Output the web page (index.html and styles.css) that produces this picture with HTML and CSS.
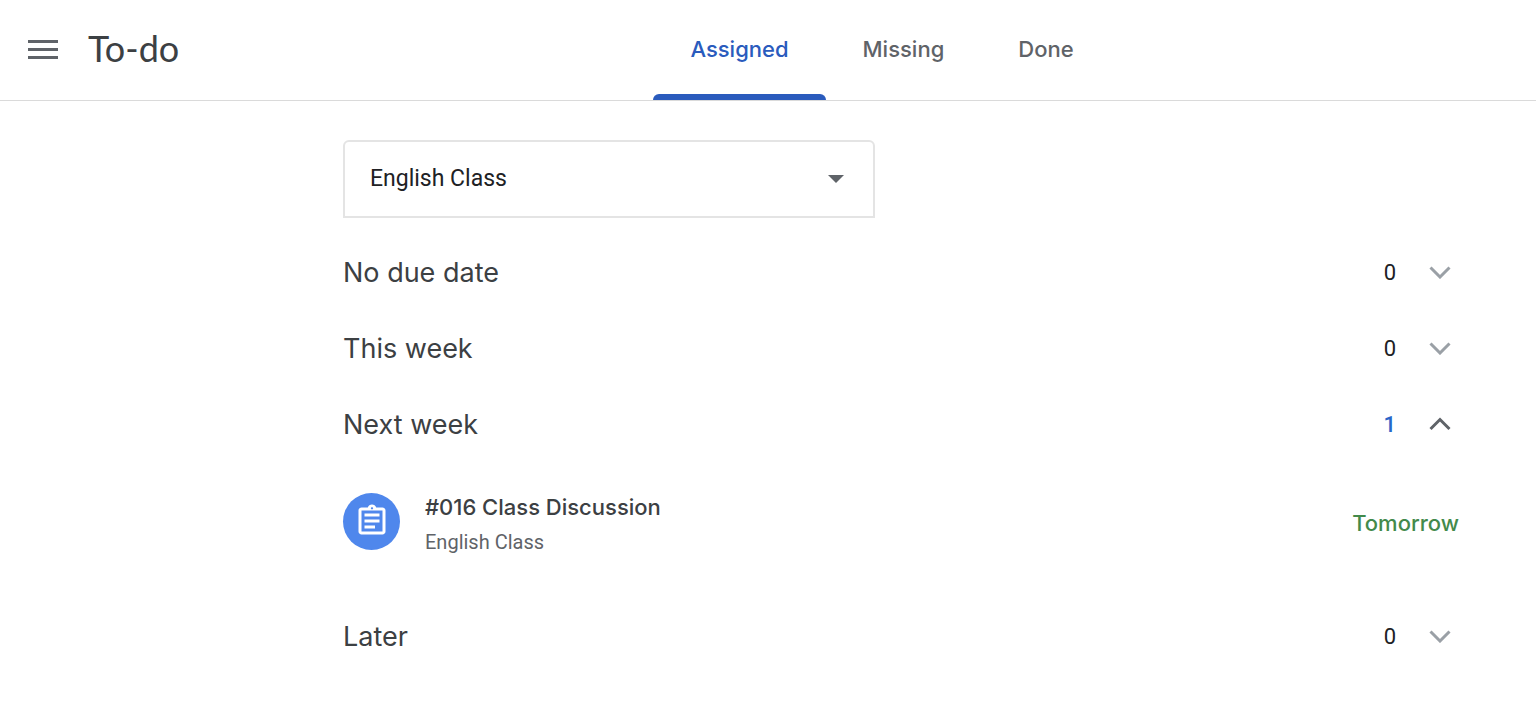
FILE: index.html
```html
<!DOCTYPE html>
<html lang="en">
<head>
  <meta charset="UTF-8">
  <meta name="viewport" content="width=device-width, initial-scale=1">
  <title>To-do</title>
  <link rel="stylesheet" href="styles.css">
</head>
<body>
  <header class="topbar">
    <div class="brand">
      <button type="button" class="menu-btn" aria-label="Main menu">
        <svg width="30" height="20" viewBox="0 0 30 20"><path d="M0 0h30v3H0zM0 8h30v3H0zM0 16h30v3H0z"/></svg>
      </button>
      <h1>To-do</h1>
    </div>
    <nav class="tabs">
      <a href="#assigned" class="tab active" aria-current="page">Assigned</a>
      <a href="#missing" class="tab">Missing</a>
      <a href="#done" class="tab">Done</a>
    </nav>
  </header>

  <main class="content">
    <div class="class-filter">
      <select aria-label="Class filter">
        <option>English Class</option>
      </select>
    </div>

    <section>
      <h2>
        <button type="button" class="group" aria-expanded="false">
          <span class="group-name">No due date</span>
          <span class="count">0</span>
          <svg class="chevron" width="22" height="14" viewBox="0 0 22 14"><path d="M1.500 2.500l9.500 9.500L20.500 2.500"/></svg>
        </button>
      </h2>
    </section>

    <section>
      <h2>
        <button type="button" class="group" aria-expanded="false">
          <span class="group-name">This week</span>
          <span class="count">0</span>
          <svg class="chevron" width="22" height="14" viewBox="0 0 22 14"><path d="M1.500 2.500l9.500 9.500L20.500 2.500"/></svg>
        </button>
      </h2>
    </section>

    <section>
      <h2>
        <button type="button" class="group open" aria-expanded="true">
          <span class="group-name">Next week</span>
          <span class="count">1</span>
          <svg class="chevron" width="22" height="14" viewBox="0 0 22 14"><path d="M1.500 12l9.500-9.500L20.500 12"/></svg>
        </button>
      </h2>
      <a href="#task-016" class="task">
        <span class="task-icon">
          <svg width="36" height="36" viewBox="0 0 24 24"><path d="M7 15h7v2H7zm0-4h10v2H7zm0-4h10v2H7zm12-4h-4.180C14.400 1.840 13.300 1 12 1s-2.400.84-2.820 2H5c-1.100 0-2 .9-2 2v14c0 1.100.9 2 2 2h14c1.100 0 2-.9 2-2V5c0-1.100-.9-2-2-2zm-7-.25c.41 0 .75.34.75.75s-.34.75-.75.75-.75-.34-.75-.75.34-.75.75-.75zM19 19H5V5h14v14z"/></svg>
        </span>
        <span class="task-text">
          <span class="task-title">#016 Class Discussion</span>
          <span class="task-class">English Class</span>
        </span>
        <span class="due">Tomorrow</span>
      </a>
    </section>

    <section>
      <h2>
        <button type="button" class="group" aria-expanded="false">
          <span class="group-name">Later</span>
          <span class="count">0</span>
          <svg class="chevron" width="22" height="14" viewBox="0 0 22 14"><path d="M1.500 2.500l9.500 9.500L20.500 2.500"/></svg>
        </button>
      </h2>
    </section>
  </main>
</body>
</html>
```
FILE: styles.css
```css
* {
  box-sizing: border-box;
}
body {
  margin: 0;
  background: #fff;
  color: #3c4043;
  font-family: Roboto, sans-serif;
}
h1, h2 {
  margin: 0;
  font-weight: 400;
}
button {
  padding: 0;
  border: 0;
  background: none;
  color: inherit;
  cursor: pointer;
}
a {
  text-decoration: none;
}

/* top bar */
.topbar {
  display: flex;
  height: 101px;
  border-bottom: 1px solid #dadada;
}
.brand {
  display: flex;
  align-items: center;
  gap: 30px;
  width: 228px;
  padding-left: 28px;
}
.menu-btn {
  display: flex;
  fill: #5f6368;
}
.brand h1 {
  padding-bottom: 4px;
  font-family: Lato, sans-serif;
  font-size: 36px;
}
.tabs {
  flex: 1;
  display: flex;
  justify-content: center;
}
.tab {
  display: flex;
  align-items: center;
  position: relative;
  padding: 0 37px 2px;
  color: #5f6368;
  font-family: Inter, sans-serif;
  font-size: 22px;
  font-weight: 500;
}
.tab.active {
  color: #2a5bbd;
}
.tab.active::after {
  content: "";
  position: absolute;
  left: 0;
  right: 0;
  bottom: 0;
  height: 6px;
  border-radius: 6px 6px 0 0;
  background: #2a5bbd;
}

.content {
  padding: 39px 77px 40px 343px;
}

/* class drop-down */
.class-filter {
  position: relative;
  width: 532px;
  max-width: 100%;
  margin-bottom: 16px;
}
.class-filter select {
  display: block;
  width: 100%;
  height: 78px;
  padding: 0 60px 2px 25px;
  border: 2px solid #e4e4e4;
  border-radius: 6px 6px 0 0;
  background: #fff;
  color: #202124;
  font-family: Roboto, sans-serif;
  font-size: 23px;
  appearance: none;
}
.class-filter::after {
  content: "";
  position: absolute;
  top: 35px;
  right: 31px;
  border: 8px solid transparent;
  border-top-color: #5f6368;
  border-bottom: 0;
  pointer-events: none;
}

/* due date groups */
.group {
  display: flex;
  align-items: center;
  width: 100%;
  height: 76px;
  padding-right: 8px;
  text-align: left;
}
.group-name {
  flex: 1;
  font-family: Inter, sans-serif;
  font-size: 27px;
}
.count {
  color: #202124;
  font-family: Roboto, sans-serif;
  font-size: 22px;
}
.chevron {
  margin-left: 33px;
  fill: none;
  stroke: #9aa0a6;
  stroke-width: 3;
}
.open .count {
  color: #2a66c8;
  font-weight: 500;
}
.open .chevron {
  stroke: #5f6368;
}

/* assignment row */
.task {
  display: flex;
  align-items: center;
  height: 118px;
  margin-bottom: 18px;
}
.task-icon {
  display: flex;
  align-items: center;
  justify-content: center;
  width: 57px;
  height: 57px;
  border-radius: 50%;
  background: #4f87ec;
  fill: #fff;
}
.task-text {
  flex: 1;
  display: flex;
  flex-direction: column;
  gap: 10px;
  margin-left: 25px;
  padding-top: 6px;
}
.task-title {
  color: #3c4043;
  font-family: Inter, sans-serif;
  font-size: 22px;
  font-weight: 500;
}
.task-class {
  color: #5f6368;
  font-size: 20px;
}
.due {
  padding-top: 4px;
  color: #438a4b;
  font-family: Inter, sans-serif;
  font-size: 22px;
  font-weight: 500;
}
```
